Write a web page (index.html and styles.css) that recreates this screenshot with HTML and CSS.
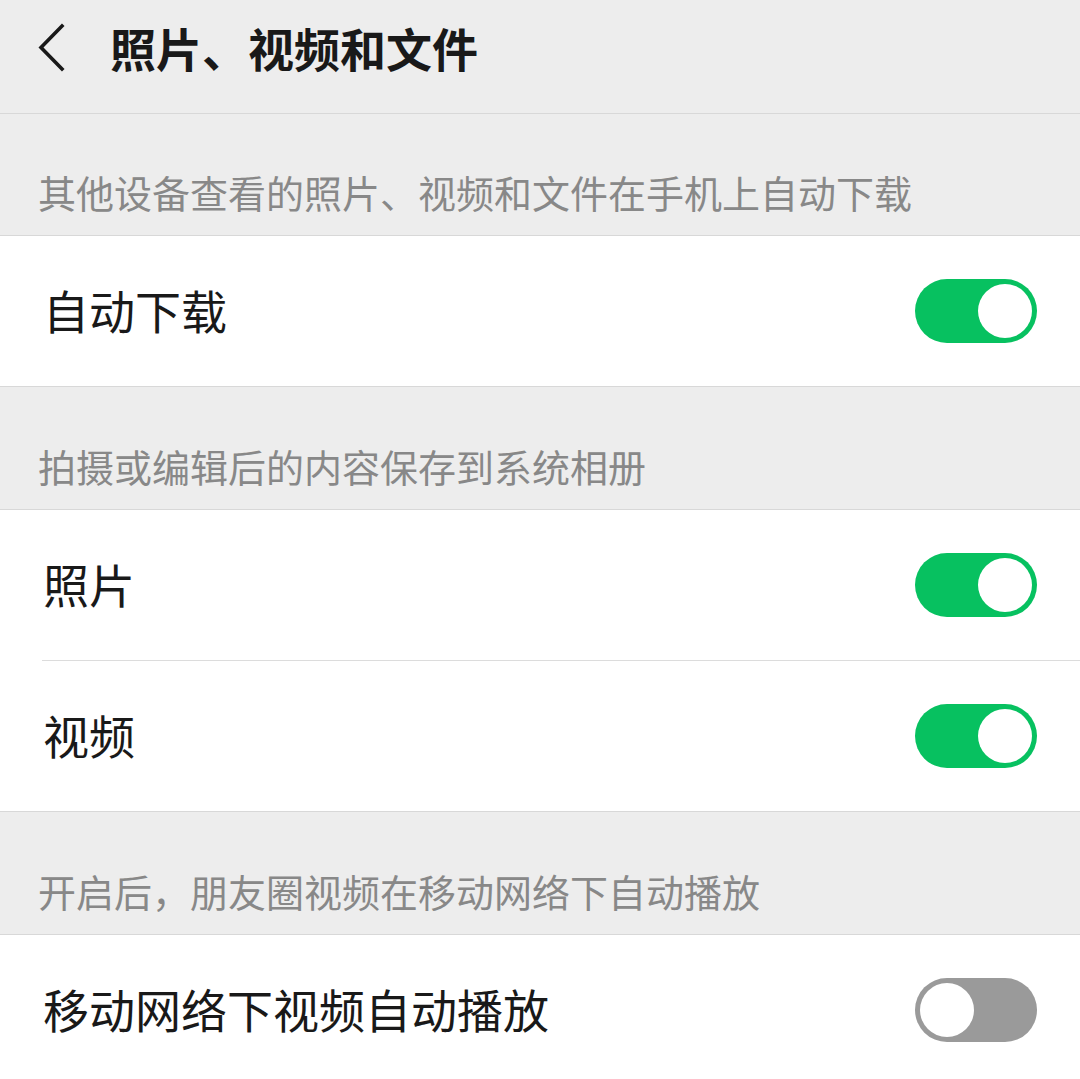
FILE: index.html
```html
<!DOCTYPE html>
<html lang="zh-CN">
<head>
    <meta charset="UTF-8">
    <meta name="viewport" content="width=device-width, initial-scale=1.0">
    <title>照片、视频和文件</title>
    <link rel="stylesheet" href="styles.css">
</head>
<body>

    <div class="page">
        <div class="top-bar">
            <span class="back-btn">
                <svg width="30" height="50" viewBox="0 0 30 50">
                    <polyline points="25,3 4,24.5 25,46" fill="none" stroke="#191919" stroke-width="3.6" stroke-linecap="square" stroke-linejoin="miter"/>
                </svg>
            </span>
            <h1>照片、视频和文件</h1>
        </div>

        <div class="section-tip">其他设备查看的照片、视频和文件在手机上自动下载</div>
        <div class="cell-group">
            <div class="cell">
                <span class="cell-label">自动下载</span>
                <span class="switch on"><span class="knob"></span></span>
            </div>
        </div>

        <div class="section-tip">拍摄或编辑后的内容保存到系统相册</div>
        <div class="cell-group">
            <div class="cell">
                <span class="cell-label">照片</span>
                <span class="switch on"><span class="knob"></span></span>
            </div>
            <div class="cell">
                <span class="cell-label">视频</span>
                <span class="switch on"><span class="knob"></span></span>
            </div>
        </div>

        <div class="section-tip">开启后，朋友圈视频在移动网络下自动播放</div>
        <div class="cell-group">
            <div class="cell">
                <span class="cell-label">移动网络下视频自动播放</span>
                <span class="switch"><span class="knob"></span></span>
            </div>
        </div>
    </div>

</body>
</html>
```

FILE: styles.css
```css
body {
    font-family: "Noto Sans CJK SC", "Noto Sans", sans-serif;
    background-color: #ededed;
    margin: 0;
    padding: 0;
    overflow: hidden;
}

.page {
    width: 1080px;
    height: 1079px;
    overflow: hidden;
}

.top-bar {
    display: flex;
    align-items: flex-start;
    border-bottom: 1px solid #d8d8d8;
    box-sizing: border-box;
    height: 114px;
    padding-top: 23px;
}

.back-btn {
    display: flex;
    margin-left: 37px;
    margin-right: 43px;
}

.top-bar h1 {
    margin: 0;
    font-size: 46px;
    font-weight: bold;
    color: #191919;
    line-height: 46px;
    margin-top: 1px;
}

.section-tip {
    height: 121px;
    box-sizing: border-box;
    padding: 59px 0 0 38px;
    font-size: 38px;
    line-height: 38px;
    color: #888888;
}

.cell-group {
    background-color: #fff;
    border-top: 1px solid #d8d8d8;
    border-bottom: 1px solid #d8d8d8;
}

.cell-group + .section-tip {
    height: 122px;
    padding-top: 60px;
}

.cell {
    height: 150px;
    display: flex;
    align-items: center;
    justify-content: space-between;
    padding: 0 43px 0 43px;
}

.cell + .cell {
    border-top: 1px solid #dcdcdc;
    margin-left: 42px;
    padding-left: 1px;
}

.cell-label {
    font-size: 46px;
    color: #191919;
    line-height: 1;
    margin-top: -4px;
}

.switch {
    width: 122px;
    height: 64px;
    border-radius: 32px;
    background-color: #9a9a9a;
    display: flex;
    align-items: center;
    padding: 0 5px;
    box-sizing: border-box;
}

.switch.on {
    background-color: #07c160;
    justify-content: flex-end;
}

.knob {
    width: 54px;
    height: 54px;
    border-radius: 50%;
    background-color: #fff;
}
```
